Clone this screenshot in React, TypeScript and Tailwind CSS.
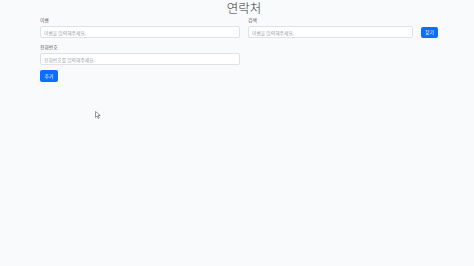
export default function App() {
  return (
    <div className="relative h-[266px] w-full overflow-hidden bg-[#f9fafb] font-['Noto_Sans_CJK_KR','Noto_Sans',sans-serif] text-[#212529]">
      <div className="ml-[40px] w-[408px]">
        <h1 className="h-[15px] text-center text-[12.5px] font-light leading-[15px] text-[#333]">연락처</h1>

        <div className="flex gap-[8px]">
          {/* 이름 / 전화번호 */}
          <div className="w-[200px]">
            <label className="block h-[11px] text-[4.8px] leading-[9px] text-[#555]">이름</label>
            <input
              placeholder="이름을 입력해주세요."
              className="block h-[12px] w-full rounded-[2px] border border-[#dee2e6] bg-white px-[3px] text-[4.8px] outline-none placeholder:text-[#9aa0a6]"
            />
            <label className="mt-[4px] block h-[11px] text-[4.8px] leading-[9px] text-[#555]">전화번호</label>
            <input
              placeholder="전화번호를 입력해주세요."
              className="block h-[12px] w-full rounded-[2px] border border-[#dee2e6] bg-white px-[3px] text-[4.8px] outline-none placeholder:text-[#9aa0a6]"
            />
            <button className="mt-[5px] flex h-[12px] w-[18px] items-center justify-center rounded-[2px] bg-[#0d6efd] text-[4.8px] text-white">
              추가
            </button>
          </div>

          {/* 검색 */}
          <div className="w-[190px]">
            <label className="block h-[11px] text-[4.8px] leading-[9px] text-[#555]">검색</label>
            <div className="flex items-center gap-[8px]">
              <input
                placeholder="이름을 입력해주세요."
                className="block h-[12px] w-[165px] rounded-[2px] border border-[#dee2e6] bg-white px-[3px] text-[4.8px] outline-none placeholder:text-[#9aa0a6]"
              />
              <button className="flex h-[11px] w-[17px] items-center justify-center rounded-[2px] bg-[#0d6efd] text-[4.8px] text-white">
                찾기
              </button>
            </div>
          </div>
        </div>
      </div>

      {/* mouse pointer */}
      <svg className="absolute left-[95px] top-[111px]" width="6" height="8" viewBox="0 0 12 16">
        <path d="M1 1 L1 13 L4 10 L6.5 15 L8.5 14 L6 9 L10.5 9 Z" fill="#fff" stroke="#555" strokeWidth="1.2" strokeLinejoin="round" />
      </svg>
    </div>
  )
}
